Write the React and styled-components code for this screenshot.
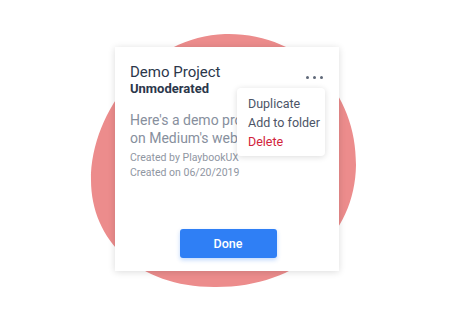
import React from "react";
import styled, { createGlobalStyle } from "styled-components";

const GlobalStyle = createGlobalStyle`
  html, body {
    margin: 0;
    padding: 0;
    background: #fff;
    font-family: Roboto, "Liberation Sans", sans-serif;
  }
`;

const Stage = styled.div`
  position: relative;
  width: 474px;
  height: 314px;
  box-sizing: border-box;
  padding: 47px 0 0 115px;
  display: flex;
  align-items: flex-start;
  overflow: hidden;
`;

const Blob = styled.svg`
  position: absolute;
  left: 0;
  top: 0;
  width: 474px;
  height: 314px;
`;

const Card = styled.div`
  position: relative;
  width: 224px;
  height: 224px;
  box-sizing: border-box;
  padding: 17px 15px 13px;
  background: #fff;
  box-shadow: 0 1px 7px rgba(0, 0, 0, 0.14);
  display: flex;
  flex-direction: column;
`;

const Header = styled.div`
  display: flex;
  justify-content: space-between;
  align-items: flex-start;
`;

const Title = styled.div`
  font-size: 15px;
  line-height: 17px;
  color: #2b374b;
`;

const Kind = styled.div`
  font-size: 13px;
  line-height: 16px;
  font-weight: 700;
  color: #2b374b;
`;

const Dots = styled.div`
  display: flex;
  gap: 4px;
  margin: 12px 1px 0 0;

  span {
    width: 3px;
    height: 3px;
    border-radius: 50%;
    background: #5f6878;
  }
`;

const Desc = styled.p`
  margin: 14px 0 0;
  font-size: 14px;
  line-height: 18px;
  color: #878f9d;
  white-space: nowrap;
`;

const Meta = styled.p`
  margin: 3px 0 0;
  font-size: 10.5px;
  line-height: 15px;
  color: #8f96a2;
`;

const Footer = styled.div`
  margin-top: auto;
  display: flex;
  justify-content: center;
  padding-left: 2px;
`;

const Button = styled.button`
  width: 97px;
  height: 29px;
  border: none;
  border-radius: 3px;
  background: #2f7ff5;
  color: #fff;
  font-family: Roboto, "Liberation Sans", sans-serif;
  font-size: 12.5px;
  font-weight: 500;
  box-shadow: 0 2px 4px rgba(47, 127, 245, 0.3);
`;

const Menu = styled.ul`
  position: absolute;
  left: 122px;
  top: 41px;
  width: 88px;
  margin: 0;
  padding: 6px 0 5px 11px;
  box-sizing: border-box;
  list-style: none;
  background: #fff;
  border-radius: 4px;
  box-shadow: 0 1px 6px rgba(0, 0, 0, 0.14);
`;

const Item = styled.li`
  font-size: 12.5px;
  line-height: 19px;
  color: ${(p) => (p.danger ? "#d2233b" : "#4c5567")};
  white-space: nowrap;
`;

export default function App() {
  return (
    <>
      <GlobalStyle />
      <Stage>
        <Blob viewBox="0 0 474 314">
          <path
            d="M225 34 C302 32 357 92 356 165 C355 236 298 288 214 287 C138 287 91 240 91 180 C91 110 150 36 225 34 Z"
            fill="#ec8c8c"
          />
        </Blob>
        <Card>
          <Header>
            <div>
              <Title>Demo Project</Title>
              <Kind>Unmoderated</Kind>
            </div>
            <Dots>
              <span />
              <span />
              <span />
            </Dots>
          </Header>
          <Desc>
            Here's a demo project
            <br />
            on Medium's website
          </Desc>
          <Meta>
            Created by PlaybookUX
            <br />
            Created on 06/20/2019
          </Meta>
          <Footer>
            <Button>Done</Button>
          </Footer>
          <Menu>
            <Item>Duplicate</Item>
            <Item>Add to folder</Item>
            <Item danger>Delete</Item>
          </Menu>
        </Card>
      </Stage>
    </>
  );
}
